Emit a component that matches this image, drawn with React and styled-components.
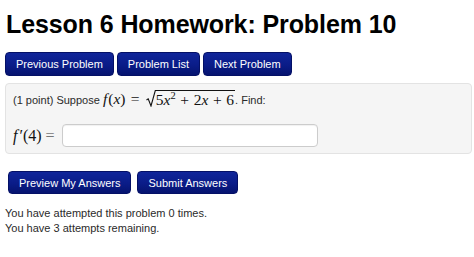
import React from "react";
import styled, { createGlobalStyle } from "styled-components";

const Global = createGlobalStyle`
  html, body { margin: 0; padding: 0; background: #fff; }
  body { font-family: "Liberation Sans", Arial, sans-serif; color: #333; }
`;

const Page = styled.div`
  padding: 9px 2px 0 5px;
`;

const Title = styled.h1`
  margin: 0 0 13px 1px;
  font-size: 25px;
  line-height: 30px;
  font-weight: bold;
  color: #000;
  letter-spacing: -0.1px;
`;

const ButtonRow = styled.div`
  display: flex;
  gap: ${(p) => p.$gap}px;
  margin: ${(p) => p.$margin};
`;

const NavButton = styled.button`
  height: ${(p) => p.$h}px;
  padding: 0 10px;
  font-family: "Liberation Sans", Arial, sans-serif;
  font-size: 11px;
  color: #fff;
  background: linear-gradient(to bottom, #10259a 0%, #0a1c88 55%, #05136f 100%);
  border: 1px solid #041066;
  border-radius: 4px;
  cursor: pointer;
  white-space: nowrap;
`;

const ProblemBox = styled.div`
  margin-top: 7px;
  background: #f5f5f5;
  border: 1px solid #e3e3e3;
  border-radius: 4px;
  padding: 6px 8px 6px 7px;
`;

const Statement = styled.div`
  font-size: 11px;
  line-height: 20px;
  color: #2a2a2a;
  margin-bottom: 14px;
  white-space: nowrap;
`;

const MathWrap = styled.span`
  font-family: "Liberation Serif", "Times New Roman", serif;
  font-size: 15.5px;
  color: #111;
  line-height: 1;
`;

const MI = styled.span`
  font-style: italic;
  padding-right: ${(p) => p.$pr || 0}px;
`;

const MN = styled.span`
  font-style: normal;
`;

const Op = styled.span`
  display: inline-block;
  margin: 0 ${(p) => p.$m}em;
  color: ${(p) => p.$c || "#111"};
`;

const Sup = styled.sup`
  font-size: 10.5px;
  vertical-align: 6px;
  line-height: 0;
`;

const Sqrt = styled.span`
  display: inline-flex;
  align-items: stretch;
  vertical-align: -3px;
  margin-left: 1px;
`;

const Radical = styled.svg`
  width: 10px;
  height: 17px;
  flex: none;
`;

const Radicand = styled.span`
  display: inline-block;
  border-top: 1px solid #111;
  padding: 2px 1px 1px 0;
  line-height: 13px;
`;

const AnswerRow = styled.div`
  display: flex;
  align-items: center;
  gap: 3px;
`;

const AnswerLabel = styled.span`
  font-family: "Liberation Serif", "Times New Roman", serif;
  font-size: 16px;
  color: #111;
`;

const AnswerInput = styled.input`
  box-sizing: border-box;
  width: 256px;
  height: 23px;
  background: #fff;
  border: 1px solid #ccc;
  border-radius: 4px;
  box-shadow: inset 0 1px 1px rgba(0, 0, 0, 0.06);
  outline: none;
  padding: 0 6px;
`;

const Info = styled.p`
  margin: 12px 0 0 0;
  font-size: 11px;
  line-height: 15px;
  color: #2a2a2a;
`;

export default function App() {
  return (
    <Page>
      <Global />
      <Title>Lesson 6 Homework: Problem 10</Title>
      <ButtonRow $gap={3} $margin="0">
        <NavButton $h={24}>Previous Problem</NavButton>
        <NavButton $h={24}>Problem List</NavButton>
        <NavButton $h={24}>Next Problem</NavButton>
      </ButtonRow>
      <ProblemBox>
        <Statement>
          (1 point) Suppose{" "}
          <MathWrap>
            <MI $pr={1}>f</MI>
            <MN>(</MN>
            <MI>x</MI>
            <MN>)</MN>
            <Op $m={0.34}>=</Op>
            <Sqrt>
              <Radical viewBox="0 0 10 17">
                <path
                  d="M0.5 10 L2.2 8.8 L5 16 L9.3 0.5 L10 0.5"
                  fill="none"
                  stroke="#111"
                  strokeWidth="1.1"
                  strokeLinejoin="miter"
                />
              </Radical>
              <Radicand>
                <MN>5</MN>
                <MI>x</MI>
                <Sup>2</Sup>
                <Op $m={0.3}>+</Op>
                <MN>2</MN>
                <MI>x</MI>
                <Op $m={0.3}>+</Op>
                <MN>6</MN>
              </Radicand>
            </Sqrt>
          </MathWrap>
          . Find:
        </Statement>
        <AnswerRow>
          <AnswerLabel>
            <MI $pr={2}>f</MI>
            <MN>′</MN>
            <MN>(4)</MN>
            <Op $m={0.25} $c="#777">=</Op>
          </AnswerLabel>
          <AnswerInput type="text" aria-label="answer" />
        </AnswerRow>
      </ProblemBox>
      <ButtonRow $gap={6} $margin="17px 0 0 3px">
        <NavButton $h={23}>Preview My Answers</NavButton>
        <NavButton $h={23}>Submit Answers</NavButton>
      </ButtonRow>
      <Info>
        You have attempted this problem 0 times.
        <br />
        You have 3 attempts remaining.
      </Info>
    </Page>
  );
}
